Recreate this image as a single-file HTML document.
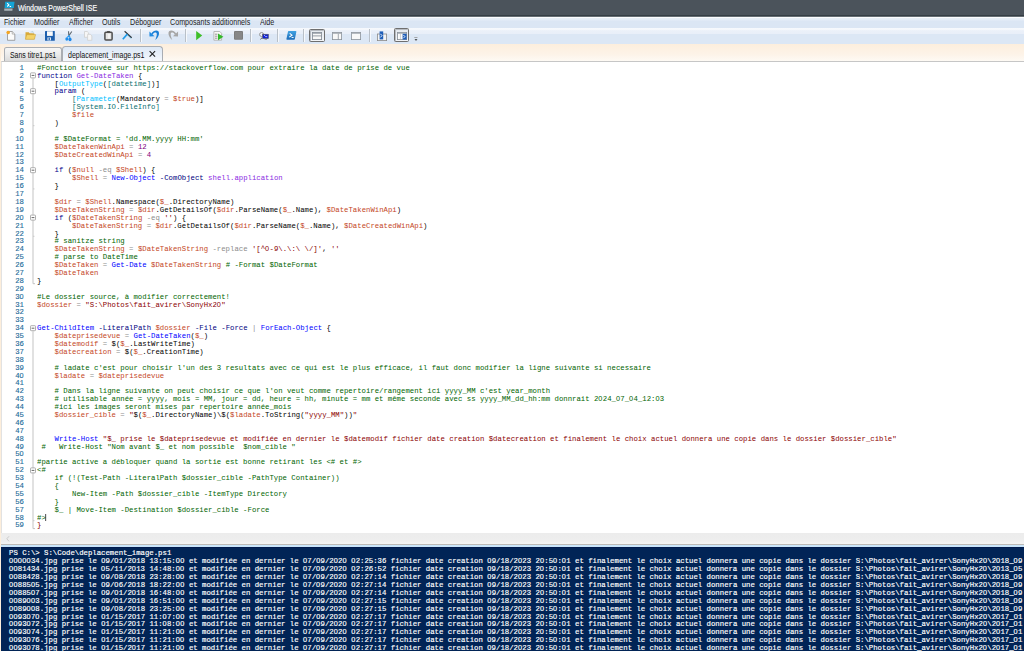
<!DOCTYPE html>
<html><head><meta charset="utf-8">
<style>
*{margin:0;padding:0;box-sizing:border-box}
html,body{width:1024px;height:651px;overflow:hidden;background:#fff}
body{position:relative;font-family:"Liberation Sans",sans-serif}
.abs{position:absolute}
svg{position:absolute;overflow:visible}
#title{left:0;top:0;width:1024px;height:17px;background:linear-gradient(#4b535b 0,#4b535b 15px,#353e44 15px,#353e44 16px,#656d73 16px,#656d73 17px)}
#title .txt{position:absolute;left:17.5px;top:3.2px;font-size:8.4px;color:#fff;-webkit-text-stroke:0.15px #fff;line-height:10px;white-space:nowrap;transform:scaleX(0.8367);transform-origin:0 0}
#tline{left:0;top:17px;width:1024px;height:1px;background:#fbfcfe}
#menu{left:0;top:18px;width:1024px;height:10px;background:linear-gradient(#e8eff8 0,#e4ecf7 2px,#dbe6f4 3px,#dbe6f4 100%)}
#menu span{position:absolute;top:0.2px;font-size:8.2px;line-height:9px;color:#1e1e1e;white-space:nowrap;transform:scaleX(0.873);transform-origin:0 0}
#tool{left:0;top:28px;width:1024px;height:16px;background:linear-gradient(#f6f9fd 0,#f4f7fc 2px,#ebf0f9 2.6px,#e9eff9 6px,#dce7f5 6.4px,#dce7f5 100%)}
.sep{position:absolute;top:29px;width:1px;height:13px;background:#b9c0c8;box-shadow:1px 0 0 #f6f9fd}
#tabs{left:0;top:44px;width:1024px;height:17px;background:linear-gradient(#fdeedd,#fdf3e8 60%,#fefaf4)}
.tab{position:absolute;border:1px solid #a9adb3;border-bottom:none;border-radius:2.5px 2.5px 0 0;white-space:nowrap}
.tab span{position:absolute;font-size:8px;line-height:10px;color:#1a1a1a;transform-origin:0 0}
#edit{left:1px;top:61px;width:1023px;height:472px;background:#fff;border-top:1px solid #c6c6c6;border-left:1px solid #e2e2e2}
#lb{left:0;top:44px;width:1.2px;height:607px;background:#fdeedb}
pre{font-family:"Liberation Mono",monospace;font-size:8px;line-height:7.89px;white-space:pre}
#nums{position:absolute;left:0px;width:22px;top:2.8px;text-align:right;color:#1d6a98;font-size:7.3px;-webkit-text-stroke:0.12px #1d6a98}
#code{position:absolute;left:34.5px;top:1.8px;color:#000;transform:scaleX(0.9135);transform-origin:0 0}
b{font-weight:normal}
.z{font-family:"Liberation Sans",sans-serif;letter-spacing:0.35px;line-height:0}
#nums .z{letter-spacing:0.32px}
.c{color:#006400}.k{color:#00008b}.f{color:#8a2be2}.a{color:#00bfff}.t{color:#0a7070}.v{color:#c4461e}
.o{color:#8c8c8c}.g{color:#000}.m{color:#000}.cm{color:#0000ff}.p{color:#000080}.s{color:#8b0000}.n{color:#800080}.x{color:#8b0000}
.cur{display:inline-block;width:1.1px;height:7px;background:#3a3a3a;vertical-align:top;margin-top:0.4px;margin-left:-0.9px}
#fold{position:absolute;left:0;top:0}
#hs{left:1px;top:533px;width:1023px;height:12px;background:linear-gradient(#ececec,#eeeeee 70%,#f4f4f4);border-bottom:1px solid #bdbab6}
#split{left:1px;top:545px;width:1023px;height:2px;background:#c9e5fb}
#con{left:1px;top:547px;width:1023px;height:104px;background:#012456;border-top:1px solid #001a4e}
#con pre{position:absolute;left:8px;top:1.4px;color:#fff;font-size:8px;transform:scaleX(0.9135);transform-origin:0 0;-webkit-text-stroke:0.18px #fff}
</style></head><body>
<div id="title" class="abs">
 <svg style="left:4px;top:2px" width="11" height="10" viewBox="0 0 11 10">
  <path d="M1.2 -0.2H10.5L9.8 6.1H0.5Z" fill="#14a4d6"/>
  <path d="M0.3 6.4H8.6L8.4 8.8H0.2Z" fill="#aab6bb"/>
  <path d="M3.1 1L4.9 3L3.2 4.5" stroke="#fff" stroke-width="1.1" fill="none"/>
  <path d="M5.6 4.5H7.1" stroke="#fff" stroke-width="1"/>
 </svg>
 <div class="txt">Windows PowerShell ISE</div>
</div>
<div id="tline" class="abs"></div>
<div id="menu" class="abs">
 <span style="left:3.5px">Fichier</span>
 <span style="left:33.5px">Modifier</span>
 <span style="left:69px">Afficher</span>
 <span style="left:102.3px">Outils</span>
 <span style="left:129.6px">Déboguer</span>
 <span style="left:170.3px">Composants additionnels</span>
 <span style="left:260.2px">Aide</span>
</div>
<div id="tool" class="abs">

<svg style="left:6px;top:2px" width="10" height="11" viewBox="0 0 10 11">
 <path d="M1.5 1.5H6.2L8.8 4.1V10.3H1.5Z" fill="#fbfbfb" stroke="#8e8e8e" stroke-width="0.8"/>
 <path d="M6.2 1.5V4.1H8.8" fill="#e8e8e8" stroke="#9a9a9a" stroke-width="0.6"/>
 <circle cx="2.2" cy="2.5" r="1.8" fill="#f5a623"/>
</svg>
<svg style="left:25px;top:3px" width="11" height="9" viewBox="0 0 11 9">
 <path d="M0.5 1.2H3.8L4.6 2.2H9.3V8.3H0.5Z" fill="#d9a93a"/>
 <path d="M1.6 3.6H10.6L9.4 8.3H0.5Z" fill="#f4d36a" stroke="#c89a2c" stroke-width="0.5"/>
 <path d="M5.5 1.1L8 0.6L8.4 2.6" fill="#e9eef2" stroke="#7ab" stroke-width="0.4"/>
</svg>
<svg style="left:45px;top:2.5px" width="10" height="10" viewBox="0 0 10 10">
 <rect x="0" y="0" width="9.8" height="9.8" fill="#1d5fae" rx="0.5"/>
 <rect x="2" y="0.3" width="5.8" height="4.6" fill="#fafafa"/>
 <rect x="2.4" y="6.4" width="3.6" height="3" fill="#dce6f0"/>
 <rect x="3.6" y="6.8" width="1.2" height="2.2" fill="#1d5fae"/>
</svg>
<svg style="left:65px;top:2.5px" width="8" height="11" viewBox="0 0 8 11">
 <path d="M3.5 0.3L3.8 4.6M6.8 0.5L3.9 4.6" stroke="#5f6a73" stroke-width="1.1"/>
 <ellipse cx="1.8" cy="8" rx="1.5" ry="1.7" fill="#1f8fee"/>
 <ellipse cx="5" cy="8.4" rx="1.6" ry="1.8" fill="#1e86e6"/>
 <path d="M2.2 6.4L4 4.8L5 6.6" stroke="#2a9af2" stroke-width="1.3" fill="none"/>
</svg>
<svg style="left:84px;top:3px" width="9" height="10" viewBox="0 0 9 10">
 <path d="M0.5 0.5H3.2L4.6 1.9V6.3H0.5Z" fill="#f6f6f6" stroke="#cfcfcf" stroke-width="0.8"/>
 <path d="M3.6 3.3H6.3L7.8 4.8V9.3H3.6Z" fill="#f6f6f6" stroke="#cfcfcf" stroke-width="0.8"/>
</svg>
<svg style="left:104px;top:3px" width="9" height="10" viewBox="0 0 9 10">
 <rect x="0.9" y="1.3" width="7.2" height="7.8" rx="1" fill="#dedede" stroke="#4e4e4e" stroke-width="1.5"/>
 <rect x="2.6" y="3" width="3.8" height="4.6" fill="#f4f4f4"/>
 <path d="M3.4 3V7.6" stroke="#cfcfcf" stroke-width="0.5"/>
 <rect x="3" y="0.1" width="3" height="1.6" rx="0.4" fill="#4e4e4e"/>
</svg>
<svg style="left:122px;top:3px" width="10" height="9" viewBox="0 0 10 9">
 <path d="M5 3.4L9.2 7.2" stroke="#8fd6f8" stroke-width="1.3"/>
 <path d="M2.6 0.3L9.7 6.7" stroke="#30363c" stroke-width="1.15"/>
 <path d="M5.3 3.1L0.8 8.2" stroke="#1e9be8" stroke-width="1.6"/>
</svg>
<div class="sep" style="left:140px;top:1px"></div>
<svg style="left:148.5px;top:2.4px" width="11" height="10" viewBox="0 0 11 10">
 <path d="M2.3 3.5 C4.8 -0.5 10.6 -0.8 10 3.9 C9.8 6 8.2 8.2 6.3 10 C7 7.8 8 5.2 7.8 3.9 C7.6 2.6 6.4 2.4 5.4 2.8 C4.6 3.1 4 3.9 3.8 4.8 Z" fill="#1a7ed6"/>
 <path d="M0.4 1.5 L0.5 6.4 L5.5 6.2 Z" fill="#1f8ae2"/>
</svg>
<svg style="left:168.5px;top:2.4px" width="10" height="10" viewBox="0 0 10 10">
 <path d="M 7.2 3.5 C 4.7 -0.5 -1.1 -0.8 -0.5 3.9 C -0.3 6.0 1.3 8.2 3.2 10.0 C 2.5 7.8 1.5 5.2 1.7 3.9 C 1.9 2.6 3.1 2.4 4.1 2.8 C 4.9 3.1 5.5 3.9 5.7 4.8 Z" fill="#a6a6a6"/>
 <path d="M 9.1 1.5 L 9.0 6.4 L 4.0 6.2 Z" fill="#a6a6a6"/>
</svg>
<div class="sep" style="left:185.4px;top:1px"></div>
<svg style="left:196px;top:3px" width="7" height="10" viewBox="0 0 7 10">
 <path d="M0.2 0L6.2 4.6L0.2 9.2Z" fill="#3fbf2a"/>
</svg>
<svg style="left:213px;top:2.5px" width="12" height="10" viewBox="0 0 12 10">
 <path d="M0.9 0.5H6.8L8.6 2.3V9.2H0.9Z" fill="#f7f7f5" stroke="#a9a9a9" stroke-width="0.8" stroke-linejoin="round"/>
 <path d="M2 3.2H4.4M2 5.2H4.4M2 7.2H4.4" stroke="#7d7d7d" stroke-width="0.8"/>
 <path d="M5 2.4L10.4 5.8L5 9.3Z" fill="#33b82a"/>
</svg>
<svg style="left:234px;top:3px" width="9" height="9" viewBox="0 0 9 9">
 <rect x="0" y="0" width="9" height="8.8" rx="1" fill="#7c7c7c"/>
 <rect x="1" y="1" width="7" height="6.8" fill="#878787"/>
</svg>
<div class="sep" style="left:250px;top:1px"></div>
<svg style="left:259.3px;top:3.6px" width="10" height="8" viewBox="0 0 10 8">
 <circle cx="2.6" cy="2.5" r="2" fill="#eef2f6" stroke="#8c8c8c" stroke-width="0.9"/>
 <rect x="3.5" y="2.2" width="6" height="4.4" fill="#1022d4" stroke="#5a5a4a" stroke-width="0.5"/>
 <path d="M5 3L6.6 4.6H8.2" stroke="#e8ecff" stroke-width="0.7" fill="none"/>
 <path d="M5.6 7.3H8" stroke="#7a7a6a" stroke-width="0.7"/>
 <path d="M1.4 7.3L3 5.8" stroke="#333" stroke-width="0.8"/>
</svg>
<div class="sep" style="left:277px;top:1px"></div>
<svg style="left:285.6px;top:3px" width="11" height="9" viewBox="0 0 11 9">
 <defs><linearGradient id="psg" x1="0" y1="0" x2="0" y2="1"><stop offset="0" stop-color="#3f9fe0"/><stop offset="1" stop-color="#1f6fba"/></linearGradient></defs>
 <path d="M2.6 0.7H9.8L8.2 8.1H1Z" fill="url(#psg)" stroke="url(#psg)" stroke-width="1.2" stroke-linejoin="round"/>
 <path d="M3.7 2.3L6 4.2L3.3 6.1" stroke="#fff" stroke-width="1.1" fill="none"/>
 <path d="M5.6 6.5H7.6" stroke="#fff" stroke-width="0.9"/>
</svg>
<div class="sep" style="left:302.7px;top:1px"></div>
<div class="abs" style="left:309px;top:0.7px;width:15.5px;height:13.7px;border:1px solid #6f6f6f;border-radius:1.5px;background:linear-gradient(#e4e9ef,#f3f5f8);box-shadow:inset 1px 1px 0 #b8bcc2"></div>
<svg style="left:312px;top:4px" width="10" height="8" viewBox="0 0 10 8">
 <rect x="0.4" y="0.4" width="9.2" height="7.2" fill="#f8f8f8" stroke="#7f8791" stroke-width="0.8"/>
 <rect x="0.4" y="0.4" width="9.2" height="1.3" fill="#9098a2"/>
 <path d="M0.4 3.9H9.6" stroke="#7f8791" stroke-width="0.8"/>
</svg>
<svg style="left:331.5px;top:4px" width="10" height="8" viewBox="0 0 10 8">
 <rect x="0.4" y="0.4" width="9.2" height="7.2" fill="#f8f8f8" stroke="#8a919a" stroke-width="0.8"/>
 <rect x="0.4" y="0.4" width="9.2" height="1.3" fill="#9aa1aa"/>
 <path d="M6.3 1.7V7.6" stroke="#8a919a" stroke-width="0.8"/>
</svg>
<svg style="left:351px;top:4px" width="10" height="8" viewBox="0 0 10 8">
 <rect x="0.4" y="0.4" width="9.2" height="7.2" fill="#f8f8f8" stroke="#8a919a" stroke-width="0.8"/>
 <rect x="0.4" y="0.4" width="9.2" height="1.3" fill="#9aa1aa"/>
</svg>
<div class="sep" style="left:368.7px;top:1px"></div>
<svg style="left:377px;top:2.5px" width="10" height="10" viewBox="0 0 10 10">
 <rect x="0.4" y="3" width="9.2" height="6.6" fill="#f4f4f4" stroke="#8a8a8a" stroke-width="0.8"/>
 <rect x="2.6" y="0.4" width="3.6" height="8" fill="#1f5eb8"/>
 <path d="M3.4 2.8L5 4.6L3.4 6.4" stroke="#fff" stroke-width="0.9" fill="none"/>
</svg>
<div class="abs" style="left:394px;top:0.4px;width:15.2px;height:13.6px;border:1px solid #6f6f6f;border-radius:1.5px;background:linear-gradient(#e4e9ef,#f3f5f8);box-shadow:inset 1px 1px 0 #b8bcc2"></div>
<svg style="left:396.8px;top:4.2px" width="10" height="8" viewBox="0 0 10 8">
 <rect x="0.4" y="0.4" width="9.2" height="7.2" fill="#fbfbfb" stroke="#858c95" stroke-width="0.8"/>
 <rect x="0.4" y="0.4" width="9.2" height="1.3" fill="#9aa1aa"/>
 <rect x="5.6" y="1.8" width="4" height="5.8" fill="#1f5eb8"/>
 <path d="M6.4 3L7.9 4.6L6.4 6.2" stroke="#fff" stroke-width="0.9" fill="none"/>
 <path d="M3.4 1.7V7.6" stroke="#b0b0b0" stroke-width="0.6"/>
</svg>
<svg style="left:414px;top:9px" width="4" height="4" viewBox="0 0 4 4">
 <path d="M0.3 0.5H3.5" stroke="#888" stroke-width="0.7"/>
 <path d="M0.5 2.2H3.5L2 3.8Z" fill="#222"/>
</svg>

</div>
<div id="tabs" class="abs">
 <div class="tab" style="left:4px;top:3px;width:58px;height:14px;background:linear-gradient(#f7f7f7,#ebebeb 50%,#dadada)"><span style="left:5.3px;top:2px;font-size:8.5px;color:#111;transform:scaleX(0.815)">Sans titre1.ps1</span></div>
 <div class="tab" style="left:62px;top:1.6px;width:101px;height:16.4px;border-radius:3.5px 3.5px 0 0;background:linear-gradient(#dde8f6,#e9f0f9 50%,#f7f9fc)"><span style="left:4.6px;top:3.4px;font-size:8.5px;color:#111;transform:scaleX(0.826)">deplacement_image.ps1</span>
  <svg style="left:86.2px;top:4.4px" width="7" height="6" viewBox="0 0 7 6"><path d="M0.6 0.2L6.1 5.6M6.1 0.2L0.6 5.6" stroke="#262626" stroke-width="1.15"/></svg>
 </div>
</div>
<div id="edit" class="abs">
 <pre id="nums">1
2
3
4
5
6
7
8
9
1<b class="z">0</b>
11
12
13
14
15
16
17
18
19
2<b class="z">0</b>
21
22
23
24
25
26
27
28
29
3<b class="z">0</b>
31
32
33
34
35
36
37
38
39
4<b class="z">0</b>
41
42
43
44
45
46
47
48
49
5<b class="z">0</b>
51
52
53
54
55
56
57
58
59</pre>
 <svg style="left:0;top:0" width="40" height="470"><path d="M31.0 16.40V221.70H33.0" stroke="#c3c3c3" stroke-width="1" fill="none"/><path d="M31.0 269.20V466.60H33.0" stroke="#c3c3c3" stroke-width="1" fill="none"/><path d="M31.0 63.70H32.5" stroke="#c3c3c3" stroke-width="0.8"/><path d="M31.0 126.90H32.5" stroke="#c3c3c3" stroke-width="0.8"/><path d="M31.0 174.30H32.5" stroke="#c3c3c3" stroke-width="0.8"/><path d="M31.0 458.70H32.5" stroke="#c3c3c3" stroke-width="0.8"/><rect x="28.5" y="10.90" width="5" height="5" fill="#fff" stroke="#a7a7a7" stroke-width="0.9" rx="0.6"/><path d="M29.6 13.40H32.4" stroke="#555" stroke-width="0.9"/><rect x="28.5" y="26.70" width="5" height="5" fill="#fff" stroke="#a7a7a7" stroke-width="0.9" rx="0.6"/><path d="M29.6 29.20H32.4" stroke="#555" stroke-width="0.9"/><rect x="28.5" y="105.70" width="5" height="5" fill="#fff" stroke="#a7a7a7" stroke-width="0.9" rx="0.6"/><path d="M29.6 108.20H32.4" stroke="#555" stroke-width="0.9"/><rect x="28.5" y="153.10" width="5" height="5" fill="#fff" stroke="#a7a7a7" stroke-width="0.9" rx="0.6"/><path d="M29.6 155.60H32.4" stroke="#555" stroke-width="0.9"/><rect x="28.5" y="263.70" width="5" height="5" fill="#fff" stroke="#a7a7a7" stroke-width="0.9" rx="0.6"/><path d="M29.6 266.20H32.4" stroke="#555" stroke-width="0.9"/><rect x="28.5" y="405.90" width="5" height="5" fill="#fff" stroke="#a7a7a7" stroke-width="0.9" rx="0.6"/><path d="M29.6 408.40H32.4" stroke="#555" stroke-width="0.9"/></svg>
 <pre id="code"><b class="c">#Fonction trouvée sur https://stackoverflow.com pour extraire la date de prise de vue</b>
<b class="k">function</b> <b class="f">Get-DateTaken</b> <b class="g">{</b>
    <b class="g">[</b><b class="a">OutputType</b><b class="g">(</b><b class="t">[datetime]</b><b class="g">)]</b>
    <b class="k">param</b> <b class="g">(</b>
        <b class="t">[</b><b class="a">Parameter</b><b class="g">(</b><b class="m">Mandatory</b> <b class="o">=</b> <b class="v">$true</b><b class="g">)]</b>
        <b class="t">[System.IO.FileInfo]</b>
        <b class="v">$file</b>
    <b class="g">)</b>

    <b class="c"># $DateFormat = 'dd.MM.yyyy HH:mm'</b>
    <b class="v">$DateTakenWinApi</b> <b class="o">=</b> <b class="n">12</b>
    <b class="v">$DateCreatedWinApi</b> <b class="o">=</b> <b class="n">4</b>

    <b class="k">if</b> <b class="g">(</b><b class="v">$null</b> <b class="o">-eq</b> <b class="v">$Shell</b><b class="g">)</b> <b class="g">{</b>
        <b class="v">$Shell</b> <b class="o">=</b> <b class="cm">New-Object</b> <b class="p">-ComObject</b> <b class="f">shell.application</b>
    <b class="g">}</b>

    <b class="v">$dir</b> <b class="o">=</b> <b class="v">$Shell</b><b class="m">.Namespace</b><b class="g">(</b><b class="v">$_</b><b class="m">.DirectoryName</b><b class="g">)</b>
    <b class="v">$DateTakenString</b> <b class="o">=</b> <b class="v">$dir</b><b class="m">.GetDetailsOf</b><b class="g">(</b><b class="v">$dir</b><b class="m">.ParseName</b><b class="g">(</b><b class="v">$_</b><b class="m">.Name</b><b class="g">),</b> <b class="v">$DateTakenWinApi</b><b class="g">)</b>
    <b class="k">if</b> <b class="g">(</b><b class="v">$DateTakenString</b> <b class="o">-eq</b> <b class="s">''</b><b class="g">)</b> <b class="g">{</b>
        <b class="v">$DateTakenString</b> <b class="o">=</b> <b class="v">$dir</b><b class="m">.GetDetailsOf</b><b class="g">(</b><b class="v">$dir</b><b class="m">.ParseName</b><b class="g">(</b><b class="v">$_</b><b class="m">.Name</b><b class="g">),</b> <b class="v">$DateCreatedWinApi</b><b class="g">)</b>
    <b class="g">}</b>
    <b class="c"># sanitze string</b>
    <b class="v">$DateTakenString</b> <b class="o">=</b> <b class="v">$DateTakenString</b> <b class="o">-replace</b> <b class="s">'[^<b class="z">0</b>-9\.\:\ \/]'</b><b class="g">,</b> <b class="s">''</b>
    <b class="c"># parse to DateTime</b>
    <b class="v">$DateTaken</b> <b class="o">=</b> <b class="cm">Get-Date</b> <b class="v">$DateTakenString</b> <b class="c"># -Format $DateFormat</b>
    <b class="v">$DateTaken</b>
<b class="g">}</b>

<b class="c">#Le dossier source, à modifier correctement!</b>
<b class="v">$dossier</b> <b class="o">=</b> <b class="s">"S:\Photos\fait_avirer\SonyHx2<b class="z">0</b>"</b>


<b class="cm">Get-ChildItem</b> <b class="p">-LiteralPath</b> <b class="v">$dossier</b> <b class="p">-File</b> <b class="p">-Force</b> <b class="o">|</b> <b class="cm">ForEach-Object</b> <b class="g">{</b>
    <b class="v">$dateprisedevue</b> <b class="o">=</b> <b class="cm">Get-DateTaken</b><b class="g">(</b><b class="v">$_</b><b class="g">)</b>
    <b class="v">$datemodif</b> <b class="o">=</b> <b class="g">$(</b><b class="v">$_</b><b class="m">.LastWriteTime</b><b class="g">)</b>
    <b class="v">$datecreation</b> <b class="o">=</b> <b class="g">$(</b><b class="v">$_</b><b class="m">.CreationTime</b><b class="g">)</b>

    <b class="c"># ladate c'est pour choisir l'un des 3 resultats avec ce qui est le plus efficace, il faut donc modifier la ligne suivante si necessaire</b>
    <b class="v">$ladate</b> <b class="o">=</b> <b class="v">$dateprisedevue</b>

    <b class="c"># Dans la ligne suivante on peut choisir ce que l'on veut comme repertoire/rangement ici yyyy_MM c'est year_month</b>
    <b class="c"># utilisable année = yyyy, mois = MM, jour = dd, heure = hh, minute = mm et même seconde avec ss yyyy_MM_dd_hh:mm donnrait 2<b class="z">0</b>24_<b class="z">0</b>7_<b class="z">0</b>4_12:<b class="z">0</b>3</b>
    <b class="c">#ici les images seront mises par repertoire année_mois</b>
    <b class="v">$dossier_cible</b> <b class="o">=</b> <b class="s">"</b><b class="g">$(</b><b class="v">$_</b><b class="m">.DirectoryName</b><b class="g">)\$(</b><b class="v">$ladate</b><b class="m">.ToString</b><b class="g">(</b><b class="s">"yyyy_MM"</b><b class="g">))</b><b class="s">"</b>


    <b class="cm">Write-Host</b> <b class="s">"$_ prise le $dateprisedevue et modifiée en dernier le $datemodif fichier date creation $datecreation et finalement le choix actuel donnera une copie dans le dossier $dossier_cible"</b>
 <b class="c">#   Write-Host "Nom avant $_ et nom possible  $nom_cible "</b>

<b class="c">#partie active a débloquer quand la sortie est bonne retirant les &lt;# et #&gt;</b>
<b class="c">&lt;#</b>
<b class="c">    if (!(Test-Path -LiteralPath $dossier_cible -PathType Container))</b>
<b class="c">    {</b>
<b class="c">        New-Item -Path $dossier_cible -ItemType Directory</b>
<b class="c">    }</b>
<b class="c">    $_ | Move-Item -Destination $dossier_cible -Force</b>
<b class="c">#&gt;</b><i class="cur"></i>
<b class="x">}</b></pre>
</div>
<div id="hs" class="abs">
 <svg style="left:4.6px;top:2.6px" width="4" height="6" viewBox="0 0 4 6"><path d="M3 0.3L0.8 2.8L3 5.3" stroke="#c6c6c6" stroke-width="0.9" fill="none"/></svg>
</div>
<div id="split" class="abs"></div>
<div id="con" class="abs"><pre>PS C:\&gt; S:\Code\deplacement_image.ps1
<b class="z">0</b><b class="z">0</b><b class="z">0</b><b class="z">0</b><b class="z">0</b>34.jpg prise le <b class="z">0</b>9/<b class="z">0</b>1/2<b class="z">0</b>18 13:15:<b class="z">0</b><b class="z">0</b> et modifiée en dernier le <b class="z">0</b>7/<b class="z">0</b>9/2<b class="z">0</b>2<b class="z">0</b> <b class="z">0</b>2:25:36 fichier date creation <b class="z">0</b>9/18/2<b class="z">0</b>23 2<b class="z">0</b>:5<b class="z">0</b>:<b class="z">0</b>1 et finalement le choix actuel donnera une copie dans le dossier S:\Photos\fait_avirer\SonyHx2<b class="z">0</b>\2<b class="z">0</b>18_<b class="z">0</b>9
<b class="z">0</b><b class="z">0</b>81434.jpg prise le <b class="z">0</b>5/11/2<b class="z">0</b>13 14:48:<b class="z">0</b><b class="z">0</b> et modifiée en dernier le <b class="z">0</b>7/<b class="z">0</b>9/2<b class="z">0</b>2<b class="z">0</b> <b class="z">0</b>2:26:52 fichier date creation <b class="z">0</b>9/18/2<b class="z">0</b>23 2<b class="z">0</b>:5<b class="z">0</b>:<b class="z">0</b>1 et finalement le choix actuel donnera une copie dans le dossier S:\Photos\fait_avirer\SonyHx2<b class="z">0</b>\2<b class="z">0</b>13_<b class="z">0</b>5
<b class="z">0</b><b class="z">0</b>88428.jpg prise le <b class="z">0</b>9/<b class="z">0</b>8/2<b class="z">0</b>18 23:28:<b class="z">0</b><b class="z">0</b> et modifiée en dernier le <b class="z">0</b>7/<b class="z">0</b>9/2<b class="z">0</b>2<b class="z">0</b> <b class="z">0</b>2:27:14 fichier date creation <b class="z">0</b>9/18/2<b class="z">0</b>23 2<b class="z">0</b>:5<b class="z">0</b>:<b class="z">0</b>1 et finalement le choix actuel donnera une copie dans le dossier S:\Photos\fait_avirer\SonyHx2<b class="z">0</b>\2<b class="z">0</b>18_<b class="z">0</b>9
<b class="z">0</b><b class="z">0</b>885<b class="z">0</b>5.jpg prise le <b class="z">0</b>9/<b class="z">0</b>6/2<b class="z">0</b>18 18:22:<b class="z">0</b><b class="z">0</b> et modifiée en dernier le <b class="z">0</b>7/<b class="z">0</b>9/2<b class="z">0</b>2<b class="z">0</b> <b class="z">0</b>2:27:14 fichier date creation <b class="z">0</b>9/18/2<b class="z">0</b>23 2<b class="z">0</b>:5<b class="z">0</b>:<b class="z">0</b>1 et finalement le choix actuel donnera une copie dans le dossier S:\Photos\fait_avirer\SonyHx2<b class="z">0</b>\2<b class="z">0</b>18_<b class="z">0</b>9
<b class="z">0</b><b class="z">0</b>885<b class="z">0</b>7.jpg prise le <b class="z">0</b>9/<b class="z">0</b>1/2<b class="z">0</b>18 16:48:<b class="z">0</b><b class="z">0</b> et modifiée en dernier le <b class="z">0</b>7/<b class="z">0</b>9/2<b class="z">0</b>2<b class="z">0</b> <b class="z">0</b>2:27:14 fichier date creation <b class="z">0</b>9/18/2<b class="z">0</b>23 2<b class="z">0</b>:5<b class="z">0</b>:<b class="z">0</b>1 et finalement le choix actuel donnera une copie dans le dossier S:\Photos\fait_avirer\SonyHx2<b class="z">0</b>\2<b class="z">0</b>18_<b class="z">0</b>9
<b class="z">0</b><b class="z">0</b>89<b class="z">0</b><b class="z">0</b>3.jpg prise le <b class="z">0</b>9/<b class="z">0</b>1/2<b class="z">0</b>18 16:51:<b class="z">0</b><b class="z">0</b> et modifiée en dernier le <b class="z">0</b>7/<b class="z">0</b>9/2<b class="z">0</b>2<b class="z">0</b> <b class="z">0</b>2:27:15 fichier date creation <b class="z">0</b>9/18/2<b class="z">0</b>23 2<b class="z">0</b>:5<b class="z">0</b>:<b class="z">0</b>1 et finalement le choix actuel donnera une copie dans le dossier S:\Photos\fait_avirer\SonyHx2<b class="z">0</b>\2<b class="z">0</b>18_<b class="z">0</b>9
<b class="z">0</b><b class="z">0</b>89<b class="z">0</b><b class="z">0</b>8.jpg prise le <b class="z">0</b>9/<b class="z">0</b>8/2<b class="z">0</b>18 23:25:<b class="z">0</b><b class="z">0</b> et modifiée en dernier le <b class="z">0</b>7/<b class="z">0</b>9/2<b class="z">0</b>2<b class="z">0</b> <b class="z">0</b>2:27:15 fichier date creation <b class="z">0</b>9/18/2<b class="z">0</b>23 2<b class="z">0</b>:5<b class="z">0</b>:<b class="z">0</b>1 et finalement le choix actuel donnera une copie dans le dossier S:\Photos\fait_avirer\SonyHx2<b class="z">0</b>\2<b class="z">0</b>18_<b class="z">0</b>9
<b class="z">0</b><b class="z">0</b>93<b class="z">0</b>7<b class="z">0</b>.jpg prise le <b class="z">0</b>1/15/2<b class="z">0</b>17 11:<b class="z">0</b>7:<b class="z">0</b><b class="z">0</b> et modifiée en dernier le <b class="z">0</b>7/<b class="z">0</b>9/2<b class="z">0</b>2<b class="z">0</b> <b class="z">0</b>2:27:17 fichier date creation <b class="z">0</b>9/18/2<b class="z">0</b>23 2<b class="z">0</b>:5<b class="z">0</b>:<b class="z">0</b>1 et finalement le choix actuel donnera une copie dans le dossier S:\Photos\fait_avirer\SonyHx2<b class="z">0</b>\2<b class="z">0</b>17_<b class="z">0</b>1
<b class="z">0</b><b class="z">0</b>93<b class="z">0</b>72.jpg prise le <b class="z">0</b>1/15/2<b class="z">0</b>17 11:<b class="z">0</b>8:<b class="z">0</b><b class="z">0</b> et modifiée en dernier le <b class="z">0</b>7/<b class="z">0</b>9/2<b class="z">0</b>2<b class="z">0</b> <b class="z">0</b>2:27:17 fichier date creation <b class="z">0</b>9/18/2<b class="z">0</b>23 2<b class="z">0</b>:5<b class="z">0</b>:<b class="z">0</b>1 et finalement le choix actuel donnera une copie dans le dossier S:\Photos\fait_avirer\SonyHx2<b class="z">0</b>\2<b class="z">0</b>17_<b class="z">0</b>1
<b class="z">0</b><b class="z">0</b>93<b class="z">0</b>74.jpg prise le <b class="z">0</b>1/15/2<b class="z">0</b>17 11:21:<b class="z">0</b><b class="z">0</b> et modifiée en dernier le <b class="z">0</b>7/<b class="z">0</b>9/2<b class="z">0</b>2<b class="z">0</b> <b class="z">0</b>2:27:17 fichier date creation <b class="z">0</b>9/18/2<b class="z">0</b>23 2<b class="z">0</b>:5<b class="z">0</b>:<b class="z">0</b>1 et finalement le choix actuel donnera une copie dans le dossier S:\Photos\fait_avirer\SonyHx2<b class="z">0</b>\2<b class="z">0</b>17_<b class="z">0</b>1
<b class="z">0</b><b class="z">0</b>93<b class="z">0</b>76.jpg prise le <b class="z">0</b>1/15/2<b class="z">0</b>17 11:21:<b class="z">0</b><b class="z">0</b> et modifiée en dernier le <b class="z">0</b>7/<b class="z">0</b>9/2<b class="z">0</b>2<b class="z">0</b> <b class="z">0</b>2:27:17 fichier date creation <b class="z">0</b>9/18/2<b class="z">0</b>23 2<b class="z">0</b>:5<b class="z">0</b>:<b class="z">0</b>1 et finalement le choix actuel donnera une copie dans le dossier S:\Photos\fait_avirer\SonyHx2<b class="z">0</b>\2<b class="z">0</b>17_<b class="z">0</b>1
<b class="z">0</b><b class="z">0</b>93<b class="z">0</b>78.jpg prise le <b class="z">0</b>1/15/2<b class="z">0</b>17 11:21:<b class="z">0</b><b class="z">0</b> et modifiée en dernier le <b class="z">0</b>7/<b class="z">0</b>9/2<b class="z">0</b>2<b class="z">0</b> <b class="z">0</b>2:27:17 fichier date creation <b class="z">0</b>9/18/2<b class="z">0</b>23 2<b class="z">0</b>:5<b class="z">0</b>:<b class="z">0</b>1 et finalement le choix actuel donnera une copie dans le dossier S:\Photos\fait_avirer\SonyHx2<b class="z">0</b>\2<b class="z">0</b>17_<b class="z">0</b>1</pre></div>
<div id="lb" class="abs"></div>
</body></html>
